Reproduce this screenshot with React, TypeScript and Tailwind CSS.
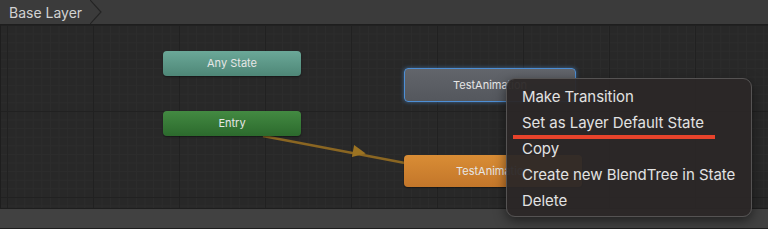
import React from 'react';

const menuItems = [
  'Make Transition',
  'Set as Layer Default State',
  'Copy',
  'Create new BlendTree in State',
  'Delete',
];

function Breadcrumb() {
  return (
    <div className="relative flex h-full items-center">
      <span className="pl-[9px] pr-[22px] text-[14px] text-[#d2d2d2]">Base Layer</span>
      <svg className="absolute right-0 top-0 h-full w-[14px]" viewBox="0 0 14 25" preserveAspectRatio="none">
        <path d="M0 0 L11 12.5 L0 25" fill="none" stroke="#242424" strokeWidth="1.2" />
      </svg>
    </div>
  );
}

function StateNode({
  label,
  className,
}: {
  label: string;
  className: string;
}) {
  return (
    <div
      className={`absolute flex items-center justify-center rounded-[4px] text-[11px] text-[#e6e6e6] ${className}`}
    >
      {label}
    </div>
  );
}

export default function App() {
  return (
    <div className="relative flex h-[229px] w-[768px] flex-col overflow-hidden bg-[#1c1c1c] font-['Inter',sans-serif]">
      {/* Top bar */}
      <div className="flex h-[25px] border-b border-[#1e1e1e] bg-[#3b3b3b]">
        <Breadcrumb />
      </div>

      {/* Graph canvas */}
      <div className="relative flex-1 border-l border-[#1e1e1e] bg-[#282828] bg-[linear-gradient(to_right,#212121_1px,transparent_1px),linear-gradient(to_bottom,#212121_1px,transparent_1px),linear-gradient(to_right,#2c2c2c_1px,transparent_1px),linear-gradient(to_bottom,#2c2c2c_1px,transparent_1px)] bg-[size:86px_86px,86px_86px,8.6px_8.6px,8.6px_8.6px] bg-[position:6px_0,0_0,6px_0,0_0]">
        <svg className="absolute inset-0 h-full w-full" viewBox="0 0 767 181">
          <line x1="262" y1="110" x2="404" y2="137" stroke="#8a6622" strokeWidth="2.5" />
          <polygon points="0,-6 13,0 0,6" fill="#9c7322" transform="translate(352 125) rotate(10.7)" />
        </svg>

        <StateNode
          label="Any State"
          className="left-[162px] top-[26px] h-[25px] w-[138px] bg-gradient-to-b from-[#6ba898] to-[#4e8777] shadow-[0_1px_2px_rgba(0,0,0,0.5)]"
        />
        <StateNode
          label="Entry"
          className="left-[162px] top-[86px] h-[25px] w-[138px] bg-gradient-to-b from-[#438a42] to-[#2c6a2d] shadow-[0_1px_2px_rgba(0,0,0,0.5)]"
        />
        <StateNode
          label="TestAnimation"
          className="left-[403px] top-[43px] h-[34px] w-[172px] border border-[#4d8fd6] bg-gradient-to-b from-[#62656b] to-[#54575d] shadow-[0_0_4px_rgba(77,143,214,0.6)]"
        />
        <StateNode
          label="TestAnimation"
          className="left-[403px] top-[130px] h-[32px] w-[178px] bg-gradient-to-b from-[#d98d35] to-[#c3762a] shadow-[0_1px_2px_rgba(0,0,0,0.5)]"
        />
      </div>

      {/* Bottom bar */}
      <div className="h-[21px] border-y border-[#1e1e1e] bg-[#414141]" />

      {/* Context menu */}
      <div className="absolute left-[506px] top-[78px] flex h-[139px] w-[246px] flex-col rounded-[9px] border border-[#555353] bg-[#2b2727]/95 pt-[5px] shadow-[0_4px_12px_rgba(0,0,0,0.5)]">
        {menuItems.map((item) => (
          <div key={item} className="flex h-[26px] items-center whitespace-nowrap px-[15px] text-[15px] tracking-[-0.05px] text-[#e2e2e2]">
            {item}
          </div>
        ))}
        <div className="absolute left-[6px] top-[56px] h-[3.5px] w-[202px] bg-[#e8432b]" />
      </div>
    </div>
  );
}
